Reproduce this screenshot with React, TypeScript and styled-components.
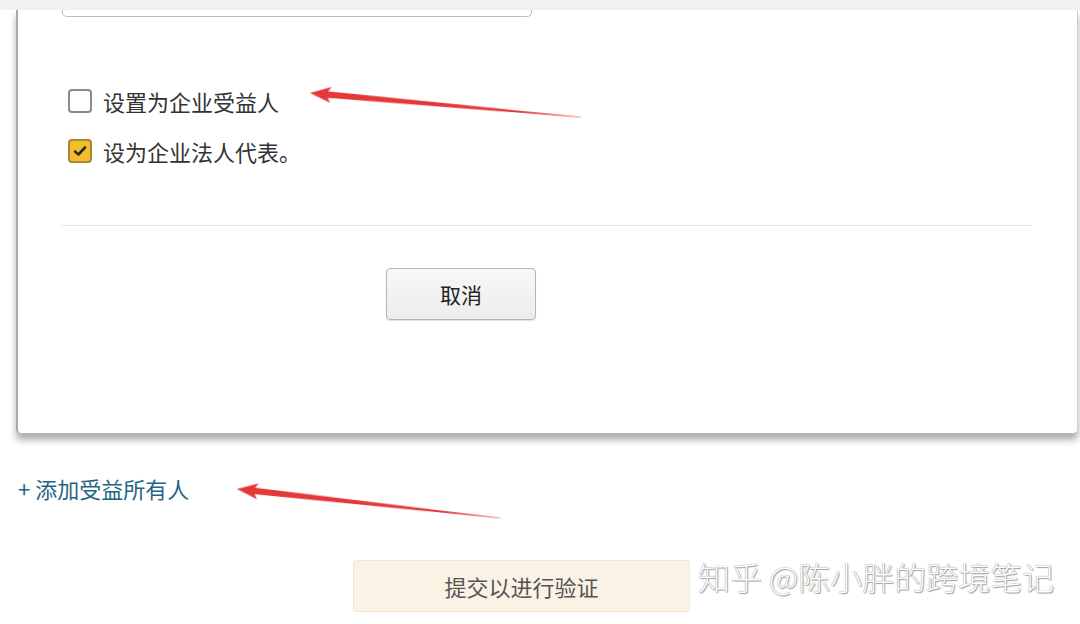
import React from "react";
import styled, { createGlobalStyle } from "styled-components";

const GlobalStyle = createGlobalStyle`
  html, body {
    margin: 0;
    padding: 0;
    background: #ffffff;
  }
  body {
    font-family: "Noto Sans CJK SC", "Noto Sans", sans-serif;
    color: #333;
  }
`;

const Page = styled.div`
  position: relative;
  width: 1080px;
  height: 624px;
  overflow: hidden;
  background: #fff;
`;

const TopStrip = styled.div`
  height: 10px;
  background: #f2f2f2;
`;

const Card = styled.section`
  box-sizing: border-box;
  margin-left: 16px;
  width: 1062px;
  border-left: 2px solid #a9a9a9;
  border-right: 1px solid #cfcfcf;
  border-bottom: 1px solid #b9b9b9;
  border-radius: 0 0 5px 5px;
  box-shadow: 0 6px 7px rgba(0, 0, 0, 0.32);
  background: #fff;
  padding: 0 0 113px 44px;
  display: flex;
  flex-direction: column;
  align-items: flex-start;
`;

const InputStub = styled.div`
  width: 468px;
  height: 6px;
  border: 1px solid #bdbdbd;
  border-top: none;
  border-radius: 0 0 5px 5px;
`;

const CheckGroup = styled.div`
  margin: 72px 0 0 6px;
  display: flex;
  flex-direction: column;
  gap: 26px;
`;

const CheckRow = styled.label`
  display: flex;
  align-items: center;
  gap: 11px;
  height: 24px;
  font-size: 22px;
  color: #333;
`;

const Box = styled.span<{ $checked?: boolean }>`
  box-sizing: border-box;
  width: 24px;
  height: 24px;
  border-radius: 4px;
  border: 2px solid ${({ $checked }) => ($checked ? "#a8873a" : "#8a8a8a")};
  background: ${({ $checked }) => ($checked ? "#f3bd2c" : "#fff")};
  display: flex;
  align-items: center;
  justify-content: center;
`;

const Divider = styled.hr`
  margin: 62px 0 0 0;
  width: 970px;
  border: none;
  border-top: 1px solid #e6e6e6;
`;

const CancelButton = styled.button`
  margin: 42px 0 0 324px;
  width: 150px;
  height: 52px;
  border: 1px solid #b5b5b5;
  border-radius: 4px;
  background: linear-gradient(#f8f8f8, #ececec);
  box-shadow: 0 1px 1px rgba(0, 0, 0, 0.12);
  font-family: "Noto Sans CJK SC", sans-serif;
  font-size: 21px;
  color: #222;
`;

const AddLink = styled.a`
  display: block;
  margin: 38px 0 0 18px;
  font-size: 22px;
  color: #1f6685;
  text-decoration: none;
`;

const SubmitButton = styled.button`
  display: block;
  margin: 56px 0 0 353px;
  width: 337px;
  height: 52px;
  border: 1px solid #f0e6d8;
  border-radius: 3px;
  background: #fbf2e6;
  font-family: "Noto Sans CJK SC", sans-serif;
  font-size: 22px;
  color: #555;
`;

const Watermark = styled.div`
  position: absolute;
  left: 698px;
  top: 553px;
  font-size: 32px;
  font-weight: 300;
  color: #ffffff;
  text-shadow: 0 0 1px #6e6e6e, 1px 1px 1px rgba(0, 0, 0, 0.35);
  white-space: nowrap;
`;

const Overlay = styled.svg`
  position: absolute;
  left: 0;
  top: 0;
  pointer-events: none;
`;

const Check = () => (
  <svg width="14" height="12" viewBox="0 0 14 12">
    <path d="M2 6.5 L5.5 9.5 L12 2.5" fill="none" stroke="#2b2b2b" strokeWidth="2.6" strokeLinecap="round" strokeLinejoin="round" />
  </svg>
);

const Arrow = ({ x, y, len, angle }: { x: number; y: number; len: number; angle: number }) => (
  <g transform={`translate(${x} ${y}) rotate(${angle})`} filter="url(#soft)">
    <polygon
      points={`0,0 21,-8 18,-3.2 ${len},-0.3 ${len},0.3 18,3.2 21,8`}
      fill="#e5393a"
    />
  </g>
);

export default function App() {
  return (
    <Page>
      <GlobalStyle />
      <TopStrip />
      <Card>
        <InputStub />
        <CheckGroup>
          <CheckRow>
            <Box />
            设置为企业受益人
          </CheckRow>
          <CheckRow>
            <Box $checked>
              <Check />
            </Box>
            设为企业法人代表。
          </CheckRow>
        </CheckGroup>
        <Divider />
        <CancelButton>取消</CancelButton>
      </Card>
      <AddLink href="#">+ 添加受益所有人</AddLink>
      <SubmitButton>提交以进行验证</SubmitButton>
      <Watermark>知乎 @陈小胖的跨境笔记</Watermark>
      <Overlay width="1080" height="624">
        <defs>
          <filter id="soft" x="-5%" y="-50%" width="110%" height="200%">
            <feGaussianBlur stdDeviation="0.7" />
          </filter>
        </defs>
        <Arrow x={310} y={93} len={272} angle={5.1} />
        <Arrow x={237} y={489} len={265} angle={6.3} />
      </Overlay>
    </Page>
  );
}
